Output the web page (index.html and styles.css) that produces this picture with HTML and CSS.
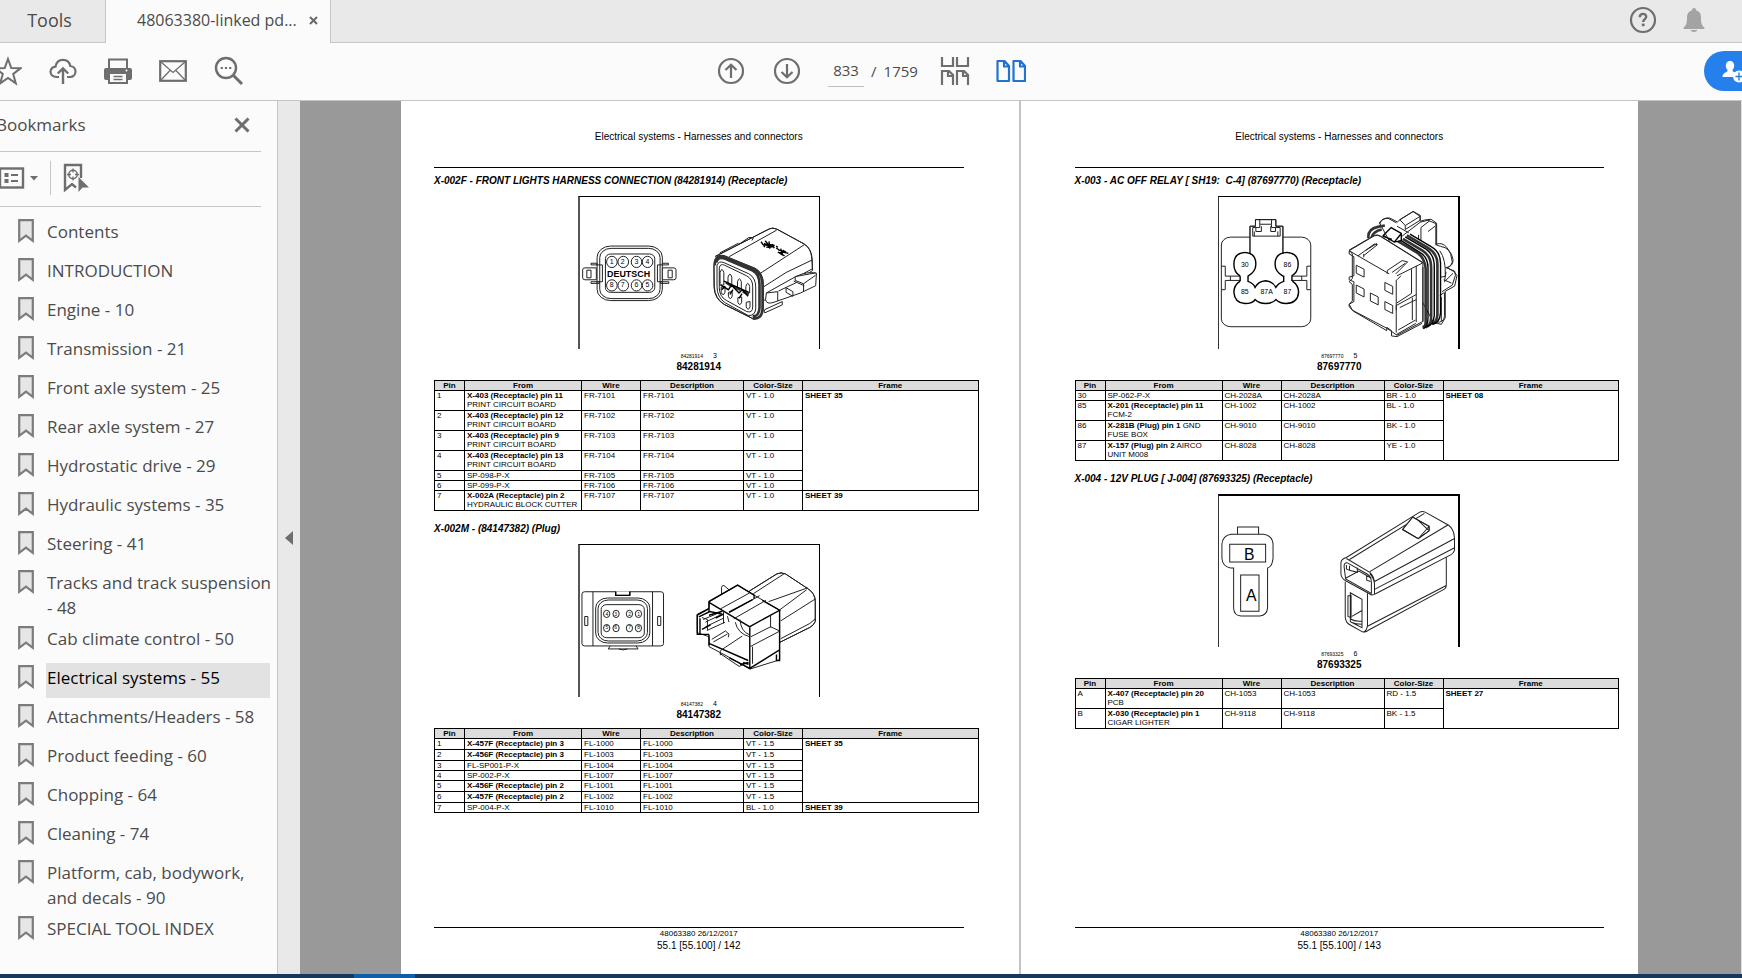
FILE: index.html
```
<!DOCTYPE html>
<html lang="en">
  <head>
    <meta charset="UTF-8" />
    <meta name="viewport" content="width=device-width, initial-scale=1.0" />
    <title>48063380-linked pdf</title>
    <link rel="stylesheet" href="styles.css">
  </head>
  <body>

    <svg class="defs" aria-hidden="true">
      <symbol id="bm" viewBox="0 0 16 24">
        <path d="M1.2 1.2h13.6v20.6L8 16.6l-6.8 5.2z" fill="#e6e6e6" stroke="#7c7c7c" stroke-width="2.2" />
      </symbol>
    </svg>

    <!-- tabs -->
    <header class="tabs">
      <button class="tab">Tools</button>
      <div class="tab active">
        <span>48063380-linked pd...</span>
        <button class="icon" aria-label="Close tab">
          <svg width="9" height="9" viewBox="0 0 9 9"><path d="M1 1l7 7M8 1L1 8" stroke="#6a6a6a" stroke-width="2" /></svg>
        </button>
      </div>
      <div class="tabs-right">
        <button class="icon" aria-label="Help">
          <svg width="28" height="28" viewBox="0 0 28 28" fill="none" stroke="#6e6e6e">
            <circle cx="14" cy="14" r="12" stroke-width="2.2" />
            <path d="M10.8 11.2c0-4.400 6.600-4.200 6.400-.4-.1 2.300-3 2.400-3 5.200" stroke-width="2.4" />
            <path d="M12.8 18.900h2.800" stroke-width="2.6" />
          </svg>
        </button>
        <button class="icon" aria-label="Notifications">
          <svg width="22" height="26" viewBox="0 0 22 26" fill="#a3a3a3">
            <path d="M11 1c1.300 0 2 .8 2 2.200 3.400.8 5 3.500 5 7 0 6 .6 8 3.400 10.300V22H.6v-1.500C3.400 18.200 4 16.200 4 10.200c0-3.500 1.600-6.200 5-7C9 1.800 9.700 1 11 1z" />
            <path d="M7.500 23h7c-.8 2.600-6.200 2.600-7 0z" />
          </svg>
        </button>
      </div>
    </header>

    <!-- toolbar -->
    <nav class="toolbar">
      <div class="tools-left">
        <button class="icon" aria-label="Star">
          <svg width="28" height="30" viewBox="0 0 28 30" fill="none" stroke="#6e6e6e" stroke-width="2"><path d="M14 3l3.300 9 9.200.3-7.300 5.700 2.600 9.300L14 22l-7.800 5.300L8.800 18 1.500 12.300l9.200-.3z" /></svg>
        </button>
        <button class="icon" aria-label="Upload">
          <svg width="28" height="28" viewBox="0 0 28 28" fill="none" stroke="#6e6e6e" stroke-width="2.200">
            <path d="M10 20H7.500C4 20 1.500 17.700 1.500 14.800S4 9.600 6.500 9.600C7.200 5.600 10 2.800 13.800 2.800c3.900 0 6.800 2.500 7.500 6.200 3 .3 5.200 2.600 5.200 5.500 0 3.200-2.500 5.500-5.500 5.500H18" />
            <path d="M14 27V11.500M8.800 16.500l5.200-5 5.200 5" stroke-width="2.400" />
          </svg>
        </button>
        <button class="icon" aria-label="Print">
          <svg width="28" height="28" viewBox="0 0 28 28" fill="none" stroke="#6e6e6e" stroke-width="2">
            <path d="M5 11V2.500h18V11" />
            <path d="M0 13q0-2 2-2h24q2 0 2 2v8q0 2-2 2h-3v-6H5v6H2q-2 0-2-2z" fill="#6e6e6e" stroke="none" />
            <path d="M5 16v10h18V16" /><path d="M9.500 19.500h9M9.500 22.500h9" stroke-width="1.300" />
            <circle cx="22.500" cy="13.500" r="1" fill="#fff" stroke="none" />
          </svg>
        </button>
        <button class="icon" aria-label="Email">
          <svg width="28" height="24" viewBox="0 0 28 24" fill="none" stroke="#6e6e6e">
            <rect x="1.200" y="2.200" width="25.600" height="19.600" stroke-width="2.200" />
            <path d="M2 3l12 10.500L26 3M2 21l9-9.500M26 21l-9-9.500" stroke-width="1.300" />
          </svg>
        </button>
        <button class="icon" aria-label="Search">
          <svg width="30" height="30" viewBox="0 0 30 30" fill="none" stroke="#6e6e6e">
            <circle cx="12" cy="12" r="10" stroke-width="2.400" />
            <path d="M19.500 19.500L28 28" stroke-width="3" />
            <path d="M6.700 12h2.200m2 0h2.200m2 0h2.200" stroke-width="2.200" />
          </svg>
        </button>
      </div>

      <div class="tools-mid">
        <button class="icon" aria-label="Previous page">
          <svg width="30" height="30" viewBox="-1 -1 30 30" fill="none" stroke="#6e6e6e" stroke-width="2.200">
            <circle cx="14" cy="14" r="12" /><path d="M14 21V8M8.500 13L14 7.800l5.500 5.200" />
          </svg>
        </button>
        <button class="icon" aria-label="Next page">
          <svg width="30" height="30" viewBox="-1 -1 30 30" fill="none" stroke="#6e6e6e" stroke-width="2.200">
            <circle cx="14" cy="14" r="12" /><path d="M14 7v13M8.500 15l5.500 5.200L19.500 15" />
          </svg>
        </button>
        <div class="pageno">
          <input id="pg" type="text" value="833" aria-label="Page number">
          <label for="pg">/</label>
          <span>1759</span>
        </div>
        <button class="icon" aria-label="Scroll view">
          <svg width="30" height="30" viewBox="0 0 30 30" fill="none" stroke="#6e6e6e" stroke-width="2.200">
            <path d="M2 1v9h11V1M17 1v9h11V1" />
            <path d="M2 29V15h7l4 4v10M17 29V15h7l4 4v10M8 15v5h5M23 15v5h5" />
          </svg>
        </button>
        <button class="icon" aria-label="Two page view">
          <svg width="30" height="24" viewBox="1 0 30 24" fill="none" stroke="#2272cf" stroke-width="2.200" stroke-linejoin="round">
            <path d="M2.500 2h7l4.500 5v15H2.500zM9 2v5.500h5M18.500 2h7L30 7v15H18.500zM25 2v5.500h5" />
          </svg>
        </button>
      </div>

      <div class="tools-right">
        <button class="share" aria-label="Share">
          <svg width="20" height="24" viewBox="0 0 20 24">
            <path d="M8 2c2.600 0 4.200 1.800 4.200 4.600 0 2-.8 3.600-1.800 4.600.2 2.400 5.600 2 5.600 6.800H.5c0-4.800 5-4.400 5.200-6.800-1-1-1.900-2.600-1.900-4.600C3.800 3.800 5.400 2 8 2z" fill="#fff" />
            <circle cx="17" cy="17.500" r="6" fill="#fff" />
            <path d="M17 13.500v8M13.500 17.500H20" stroke="#2680eb" stroke-width="1.400" />
          </svg>
        </button>
      </div>
    </nav>

    <main class="main">

      <!-- bookmarks -->
      <aside class="sidebar">
        <div class="side-head">
          <h2>Bookmarks</h2>
          <button class="icon" aria-label="Close panel">
            <svg width="16" height="16" viewBox="0 0 16 16"><path d="M1.500 1.500l13 13M14.500 1.500l-13 13" stroke="#6e6e6e" stroke-width="3" /></svg>
          </button>
        </div>
        <div class="side-tools">
          <button class="icon options" aria-label="Options">
            <svg width="40" height="22" viewBox="0 0 40 22" fill="none" stroke="#6e6e6e">
              <rect x="1" y="1.500" width="23" height="19" stroke-width="2.400" />
              <path d="M5.500 8h4m-4 6h4" stroke-width="4" /><path d="M12 8h7m-7 6h7" stroke-width="2" />
              <path d="M31 9h8l-4 4.500z" fill="#6e6e6e" stroke="none" />
            </svg>
          </button>
          <button class="icon find" aria-label="Find current bookmark">
            <svg width="26" height="30" viewBox="0 0 26 30" fill="none" stroke="#6e6e6e">
              <path d="M18 15V2H2v25l7-6 4 3.500" stroke-width="2.400" />
              <circle cx="10" cy="11.500" r="4.200" stroke-width="1.500" />
              <path d="M10 5.500v4m0 4v4M4 11.500h4m4 0h4" stroke-width="1.300" />
              <path d="M15.500 14v15l4-4.500H26z" fill="#6e6e6e" stroke="none" />
            </svg>
          </button>
        </div>
        <ul class="bookmarks">
          <li><svg class="bm"><use href="#bm" /></svg><a href="#">Contents</a></li>
          <li><svg class="bm"><use href="#bm" /></svg><a href="#">INTRODUCTION</a></li>
          <li><svg class="bm"><use href="#bm" /></svg><a href="#">Engine - 10</a></li>
          <li><svg class="bm"><use href="#bm" /></svg><a href="#">Transmission - 21</a></li>
          <li><svg class="bm"><use href="#bm" /></svg><a href="#">Front axle system - 25</a></li>
          <li><svg class="bm"><use href="#bm" /></svg><a href="#">Rear axle system - 27</a></li>
          <li><svg class="bm"><use href="#bm" /></svg><a href="#">Hydrostatic drive - 29</a></li>
          <li><svg class="bm"><use href="#bm" /></svg><a href="#">Hydraulic systems - 35</a></li>
          <li><svg class="bm"><use href="#bm" /></svg><a href="#">Steering - 41</a></li>
          <li><svg class="bm"><use href="#bm" /></svg><a href="#">Tracks and track suspension<br>- 48</a></li>
          <li><svg class="bm"><use href="#bm" /></svg><a href="#">Cab climate control - 50</a></li>
          <li><svg class="bm"><use href="#bm" /></svg><a class="current" href="#">Electrical systems - 55</a></li>
          <li><svg class="bm"><use href="#bm" /></svg><a href="#">Attachments/Headers - 58</a></li>
          <li><svg class="bm"><use href="#bm" /></svg><a href="#">Product feeding - 60</a></li>
          <li><svg class="bm"><use href="#bm" /></svg><a href="#">Chopping - 64</a></li>
          <li><svg class="bm"><use href="#bm" /></svg><a href="#">Cleaning - 74</a></li>
          <li><svg class="bm"><use href="#bm" /></svg><a href="#">Platform, cab, bodywork,<br>and decals - 90</a></li>
          <li><svg class="bm"><use href="#bm" /></svg><a href="#">SPECIAL TOOL INDEX</a></li>
        </ul>
      </aside>

      <button class="collapse" aria-label="Collapse panel">
        <svg width="8" height="14" viewBox="0 0 8 14"><path d="M8 0v14L0 7z" fill="#6e6e6e" /></svg>
      </button>

      <div class="document">

        <!-- page 142 -->
        <article class="page left">
          <header class="page-head">Electrical systems - Harnesses and connectors</header>

          <section>
            <h3>X-002F - FRONT LIGHTS HARNESS CONNECTION (84281914) (Receptacle)</h3>
            <figure>
              <svg class="draw" viewBox="0 0 241 153">
                <g transform="scale(.3827 .3333) translate(-467 -258)">
                  <rect x="512" y="406" width="172" height="165" rx="36" ry="34" />
                  <rect x="519" y="413" width="159" height="152" rx="30" ry="28" />
                  <rect x="534" y="430" width="130" height="116" rx="14" ry="14" />
                  <ellipse cx="551" cy="454" rx="14" ry="17" /><ellipse cx="581" cy="454" rx="14" ry="17" />
                  <ellipse cx="616" cy="454" rx="14" ry="17" /><ellipse cx="645" cy="454" rx="14" ry="17" />
                  <ellipse cx="551" cy="525" rx="14" ry="17" /><ellipse cx="581" cy="525" rx="14" ry="17" />
                  <ellipse cx="616" cy="525" rx="14" ry="17" /><ellipse cx="645" cy="525" rx="14" ry="17" />
                  <path class="w" d="M510 472h-30q-6 0-6 6v24q0 6 6 6h30zM684 472h30q6 0 6 6v24q0 6-6 6h-30z" />
                  <path d="M485 479h11v23h-11zM699 479h11v23h-11zM496 458h16v5h-16zM496 514h22v5h-22zM684 458h16v5h-16zM679 514h22v5h-22zM510 463h16v51h-16M684 463h-13v51h13" />
                  <!-- body -->
                  <path class="w" d="M824 437L966 354q9-5 20 1l72 45q18 12 20 45l2 35-126 90-60-60z" />
                  <path d="M824 437L966 354q9-5 20 1l72 45q20 14 21 50v25M860 438l125-80M940 490l118-88M835 427l50-30M884 402l28-22 12 1-4 8" />
                  <path d="M950 530l60-44 69-38M1079 475l-36 22" />
                  <path class="w" d="M958 548l78-50q30-16 54-10l-2 38-40 22-70 28q-20 8-22-8z" />
                  <path d="M1036 498l52-11M1034 498v12l22 10 32-26M1056 520v22M1010 532l18 12v14l-18-12zM958 548l30-4v28M990 542l48-26M1030 512l28 14M952 606l2-8 46-24v10l-46 24z" />
                  <!-- print on the housing -->
                  <path class="k" d="M944 393l10 16M952 398l18 10M955 390l14 20M962 400l18 4M965 392l2 22M975 408l-14 2M973 400l6 12M984 412l8 6M988 424l18 12M996 414l4 18M990 418l20 6M1004 418l-6 16M984 406l4 4M1002 424l14 4M948 402l14 2M958 410l16-6M992 426l16-4M996 432l8-14" />
                  <!-- seal and face -->
                  <path class="w" d="M820 465q0-34 24-30l84 38q22 12 22 50v72q-2 34-28 30l-74-42q-26-18-27-54z" />
                  <path class="rib" d="M822 465q0-32 24-28l80 38q22 12 22 50v72q-2 32-26 28M826 456q4-20 22-12l74 36q18 10 18 42v72q-2 26-18 24" />
                  <path d="M820 465v64q1 36 27 54l74 42M828 464q4-14 18-8l66 34q18 12 18 40v66q-2 22-20 20l-60-38q-22-16-22-50zM834 472q2-14 14-8l58 32q16 10 16 32v62q0 20-16 14l-54-34q-18-12-18-38z" />
                  <!-- sockets -->
                  <path d="M836 486q5-18 10 0v38h-10zM857 500q5-18 10 0v22M857 500v20M882 514q5-18 10 0v22M882 514v20M904 528q5-18 10 0v20M904 528v18M839 530v16q5 14 10 0v-16zM858 546v12q5 14 10 0v-14zM883 562v14q5 14 10 0v-16zM905 576v14q5 14 10 0v-16z" />
                  <path class="rib" d="M852 516l16 12M872 530l18 8M896 544l16 8" />
                  <path class="k" d="M846 512l66 34M838 524l20 14 8-14 20 24 8-10 16 20M840 538l10-10M862 552l8-14M886 564l8-14" />
                </g>
                <g class="num">
                  <text x="32" y="67">1</text><text x="43" y="67">2</text><text x="57" y="67">3</text><text x="68" y="67">4</text>
                  <text x="32" y="91">8</text><text x="43" y="91">7</text><text x="57" y="91">6</text><text x="68" y="91">5</text>
                </g>
                <text class="brand" x="49" y="81">DEUTSCH</text>
              </svg>
              <figcaption><small>84281914</small><span>3</span></figcaption>
              <b>84281914</b>
            </figure>
            <table>
              <colgroup><col class="c1"><col class="c2"><col class="c3"><col class="c4"><col class="c5"><col></colgroup>
              <thead>
                <tr><th>Pin</th><th>From</th><th>Wire</th><th>Description</th><th>Color-Size</th><th>Frame</th></tr>
              </thead>
              <tbody>
                <tr class="two"><td>1</td><td><b>X-403 (Receptacle) pin 11</b><br>PRINT CIRCUIT BOARD</td><td>FR-7101</td><td>FR-7101</td><td>VT - 1.0</td><td rowspan="6"><b>SHEET 35</b></td></tr>
                <tr class="two"><td>2</td><td><b>X-403 (Receptacle) pin 12</b><br>PRINT CIRCUIT BOARD</td><td>FR-7102</td><td>FR-7102</td><td>VT - 1.0</td></tr>
                <tr class="two"><td>3</td><td><b>X-403 (Receptacle) pin 9</b><br>PRINT CIRCUIT BOARD</td><td>FR-7103</td><td>FR-7103</td><td>VT - 1.0</td></tr>
                <tr class="two"><td>4</td><td><b>X-403 (Receptacle) pin 13</b><br>PRINT CIRCUIT BOARD</td><td>FR-7104</td><td>FR-7104</td><td>VT - 1.0</td></tr>
                <tr><td>5</td><td>SP-098-P-X</td><td>FR-7105</td><td>FR-7105</td><td>VT - 1.0</td></tr>
                <tr><td>6</td><td>SP-099-P-X</td><td>FR-7106</td><td>FR-7106</td><td>VT - 1.0</td></tr>
                <tr class="two"><td>7</td><td><b>X-002A (Receptacle) pin 2</b><br>HYDRAULIC BLOCK CUTTER</td><td>FR-7107</td><td>FR-7107</td><td>VT - 1.0</td><td><b>SHEET 39</b></td></tr>
              </tbody>
            </table>
          </section>

          <section>
            <h3>X-002M - (84147382) (Plug)</h3>
            <figure>
              <svg class="draw" viewBox="0 0 241 153">
                <g transform="scale(.3954 .3333) translate(-454 -43)">
                  <rect x="459" y="184" width="208" height="164" rx="7" ry="7" />
                  <path d="M487 184v164M639 184v164" />
                  <path class="w" d="M545 183v12h36v-12" />
                  <path class="k" d="M545 184v11h36v-11" />
                  <rect x="494" y="203" width="138" height="136" rx="30" ry="30" />
                  <rect x="500" y="209" width="126" height="124" rx="26" ry="26" />
                  <rect x="508" y="223" width="110" height="100" rx="14" ry="14" />
                  <ellipse cx="522" cy="251" rx="8" ry="11" /><ellipse cx="546" cy="251" rx="8" ry="11" />
                  <ellipse cx="580" cy="251" rx="8" ry="11" /><ellipse cx="603" cy="251" rx="8" ry="11" />
                  <ellipse cx="522" cy="294" rx="8" ry="11" /><ellipse cx="546" cy="294" rx="8" ry="11" />
                  <ellipse cx="580" cy="294" rx="8" ry="11" /><ellipse cx="603" cy="294" rx="8" ry="11" />
                  <path d="M466 259h8v27h-8zM652 259h8v27h-8zM531 348l-5 9h76l-5-9M553 357q10 6 22 0" />
                  <!-- rear shell -->
                  <path class="w" d="M886 182l70-52q10-6 22 0l56 44q20 14 20 40v60q-4 12-14 18l-78 46-60-60z" />
                  <path d="M886 182l70-52q10-6 22 0l56 44q20 14 20 40v60q-4 12-14 18l-78 46M896 190l78-60M935 214l100-42M962 240l70-62M966 272l88-66M966 326l74-46 14-14" />
                  <path d="M815 205v-34q0-6 6-6l18 18" />
                  <!-- front shell -->
                  <path class="w" d="M783 215l73-51 42 30 65 46v150l-76 28-50-34-54-34v-30l-30-12v-56l30-18z" />
                  <path class="k" d="M783 245v-32l73-49 42 30v12M886 290l77-50-44-30M963 240v120l-76 56M887 292v124l-52-32M783 216l104 74M783 340l100 52M963 350v42h-8v-18" />
                  <path d="M812 236l74-48M834 248l78-52M846 266l82-56M890 320l50-30 22 12M940 254v38M894 350v52M888 350l74-46M810 370l50 40 20-12M812 376v-12M850 276q6 34 36 44M862 268q2 36 24 46" />
                  <path class="k" d="M834 246l60-38M783 235l-30 20v58h30M757 260l28-16 32 8M760 264v46M783 313v34" />
                  <path d="M765 262l14 6v34M768 268l44-22M774 276l42-24M774 290l46-26M780 300l44-24M820 244v36M830 258l4 18M790 328l36-26M794 336l36-24M826 304l8 8-2 10M812 362l56-44" />
                  <path class="k" d="M783 255l34-12M765 298l22-14M800 264l20-12M862 404l22-6M870 398l14 6" />
                </g>
                <g class="num tiny">
                  <text x="27" y="71">4</text><text x="36" y="71">3</text><text x="50" y="71">2</text><text x="59" y="71">1</text>
                  <text x="27" y="85">5</text><text x="36" y="85">6</text><text x="50" y="85">7</text><text x="59" y="85">8</text>
                </g>
              </svg>
              <figcaption><small>84147382</small><span>4</span></figcaption>
              <b>84147382</b>
            </figure>
            <table>
              <colgroup><col class="c1"><col class="c2"><col class="c3"><col class="c4"><col class="c5"><col></colgroup>
              <thead>
                <tr><th>Pin</th><th>From</th><th>Wire</th><th>Description</th><th>Color-Size</th><th>Frame</th></tr>
              </thead>
              <tbody>
                <tr class="bold"><td>1</td><td><b>X-457F (Receptacle) pin 3</b></td><td>FL-1000</td><td>FL-1000</td><td>VT - 1.5</td><td rowspan="6"><b>SHEET 35</b></td></tr>
                <tr class="bold"><td>2</td><td><b>X-456F (Receptacle) pin 3</b></td><td>FL-1003</td><td>FL-1003</td><td>VT - 1.5</td></tr>
                <tr><td>3</td><td>FL-SP001-P-X</td><td>FL-1004</td><td>FL-1004</td><td>VT - 1.5</td></tr>
                <tr><td>4</td><td>SP-002-P-X</td><td>FL-1007</td><td>FL-1007</td><td>VT - 1.5</td></tr>
                <tr class="bold"><td>5</td><td><b>X-456F (Receptacle) pin 2</b></td><td>FL-1001</td><td>FL-1001</td><td>VT - 1.5</td></tr>
                <tr class="bold"><td>6</td><td><b>X-457F (Receptacle) pin 2</b></td><td>FL-1002</td><td>FL-1002</td><td>VT - 1.5</td></tr>
                <tr><td>7</td><td>SP-004-P-X</td><td>FL-1010</td><td>FL-1010</td><td>BL - 1.0</td><td><b>SHEET 39</b></td></tr>
              </tbody>
            </table>
          </section>

          <footer class="page-foot">
            <p>48063380 26/12/2017</p>
            <p class="num-line">55.1 [55.100] / 142</p>
          </footer>
        </article>

        <!-- page 143 -->
        <article class="page right">
          <header class="page-head">Electrical systems - Harnesses and connectors</header>

          <section>
            <h3>X-003 - AC OFF RELAY [ SH19:&nbsp; C-4] (87697770) (Receptacle)</h3>
            <figure class="thick">
              <svg class="draw" viewBox="0 0 241 153">
                <g transform="scale(.3954 .3333) translate(-451 -258)">
                  <rect x="457" y="379" width="228" height="271" rx="24" ry="24" />
                  <path class="w" d="M530 430v-84h14v-20h52v20h18v84" />
                  <path d="M530 346v84M614 346v84M544 326h52M544 326v20h-14M596 326v20h18M537 350h18v-10h30v10h22v26h-70zM555 340v-14M585 340v-14M545 350v12h14v-16M595 350v12h-12v-16M541 362v14M601 362v14" />
                  <path d="M457 467h10v30h38M457 538h10v-28h38M480 497v13M685 467h-10v30h-38M685 538h-10v-28h-38M662 497v13" />
                  <path class="k" d="M505 497q-16-12-16-36 0-34 28-36 28 2 28 36 0 22-20 36v16q14 6 18 18 8-18 27-20 18 2 26 20 6-12 20-18v-16h-2q-20-14-20-36 0-34 30-36 29 2 29 36 0 24-17 36M505 512q-16 12-16 34 2 32 28 34 20 0 26-12 10 12 27 12t26-12q10 12 26 12 30-2 32-34 0-22-16-34M505 497v15M637 497v15" />
                  <!-- rear latch -->
                  <path class="w" d="M860 335q10-16 26-14l20 12 6-6 34-26 18 12v18l12-4 16-2 14 12v66l10 4q26 4 32 40 0 20-16 24l18 12 8 12-6 32-24 16v80l-10 20-20-6z" />
                  <path d="M860 340q6-18 22-18l22 14M912 326l34-24 18 14-38 28zM926 344v12l38-28v-14M918 376l46-42 20-6 20 10M966 350l22-20M966 350v40M1004 338v66M984 362l18-16M905 346l30 20M960 372v14" />
                  <path d="M1006 400q14-6 26 10t14 44q-4 16-16 18M1014 420q16 26 14 78l-12 2M1028 470l24 12 2 12-8 30-26 20M1030 484l-4 30 22-26M1024 508l20 10M1026 548v68q0 16-12 20h-8M1014 556l12-10M1018 560v74" />
                  <!-- ribs -->
                  <path class="rib" d="M832 382q-2-28 24-34l18-4M840 380q4-18 26-24M930 374l52 36q26 18 26 50v154q-2 24-14 28M920 384l50 36q22 16 22 50v152q0 24-14 30M908 392l48 34q20 16 22 48v164q0 12-8 14" />
                  <path class="k" d="M938 370l54 38q24 16 24 50v150q-2 30-20 34M926 378l54 38q20 18 20 50v150q-2 30-18 32M914 388l50 38q20 14 20 46v150q0 28-12 34" />
                  <path class="k" d="M870 374l20-24 26 18v22l-18 4zM898 394l18-26M868 376l24 10" />
                  <!-- block -->
                  <path class="w" d="M783 418l64-44q8-4 16 2l108 80v178l-66 42-24-20-90-56-8-18 8-10v-50l-8-8 8-10v-74z" />
                  <path d="M783 420l64-45q8-4 16 2l108 80M783 420v10l12 8v58l-12 4v8l12 6v60l-12 8v8l12 14 84 58v-10l12 10v16l14 2 64-40M903 508v160M783 420l20 14 82 56M905 496l64-38M820 430v10M805 436l42-36 8 2-34 32M824 420l30-22M880 490v-10l38-30 14 4-30 36M892 486l34-28M905 508l10-12M942 476v74M954 466v170M903 600v-14l52-34M905 578l36-28M912 592l42-24M908 660l44-30M903 674l50-34M944 630v-68M971 470v165" />
                  <path d="M801 464l20 12v24l-20-12zM801 524l20 12v24l-20-12zM837 548l20 12v24l-20-12zM874 516l20 12v24l-20-12zM874 574l20 12v24l-20-12z" />
                </g>
                <g class="num">
                  <text x="26" y="70">30</text><text x="69" y="70">86</text>
                  <text x="26" y="98">85</text><text x="48" y="98">87A</text><text x="69" y="98">87</text>
                </g>
              </svg>
              <figcaption><small>87697770</small><span>5</span></figcaption>
              <b>87697770</b>
            </figure>
            <table>
              <colgroup><col class="c1"><col class="c2"><col class="c3"><col class="c4"><col class="c5"><col></colgroup>
              <thead>
                <tr><th>Pin</th><th>From</th><th>Wire</th><th>Description</th><th>Color-Size</th><th>Frame</th></tr>
              </thead>
              <tbody>
                <tr><td>30</td><td>SP-062-P-X</td><td>CH-2028A</td><td>CH-2028A</td><td>BR - 1.0</td><td rowspan="4"><b>SHEET 08</b></td></tr>
                <tr class="two"><td>85</td><td><b>X-201 (Receptacle) pin 11</b><br>FCM-2</td><td>CH-1002</td><td>CH-1002</td><td>BL - 1.0</td></tr>
                <tr class="two"><td>86</td><td><b>X-281B (Plug) pin 1</b> GND<br>FUSE BOX</td><td>CH-9010</td><td>CH-9010</td><td>BK - 1.0</td></tr>
                <tr class="two"><td>87</td><td><b>X-157 (Plug) pin 2</b> AIRCO<br>UNIT M008</td><td>CH-8028</td><td>CH-8028</td><td>YE - 1.0</td></tr>
              </tbody>
            </table>
          </section>

          <section>
            <h3>X-004 - 12V PLUG [ J-004] (87693325) (Receptacle)</h3>
            <figure class="thick top">
              <svg class="draw" viewBox="0 0 241 153">
                <g transform="scale(.3954 .3333) translate(-451 -104)">
                  <path d="M497 220v-22h54v22M480 220h84q22 4 24 30v44q-2 24-14 29v122q-2 22-20 24h-48q-18-2-19-24v-122h-8q-20-4-22-29v-44q2-26 23-30z" />
                  <path d="M477 251h92v54h-92zM505 344h47v110h-47z" />
                  <!-- lower block -->
                  <path d="M773 365v108q2 18 14 24l30 20q8 2 14-4l196-126q5-4 5-10v-88M830 400v98q-2 16-10 20M830 500l202-124" />
                  <!-- upper block -->
                  <path class="w" d="M762 305q2-10 14-14l188-138q6-4 14 0l60 40q14 12 15 40v36q-2 8-10 14l-192 118q-10 8-16 0l-62-40q-10-8-11-20z" />
                  <path d="M836 340q12 16 12 34v28M776 294l60 42q12 12 12 36v30M770 318q0-14 10-10l50 34q10 8 10 24v34l-66-44zM784 297l192-140M836 334l200-142M848 364l204-130M848 388l204-126" />
                  <path d="M776 314v12l8 4v-14M784 330l20 6v-14M774 354l34-22 32 22M828 346v14l10 4" />
                  <!-- latch -->
                  <path class="w" d="M920 206l26-38 42 28v14l-28 24z" />
                  <path d="M920 206l26-38 42 28v14l-28 24zM946 168l14 10 26 30M960 234l28-38" />
                  <!-- opening -->
                  <path d="M786 398l30 20v86l-30-18zM780 408v62l8 4v-68zM790 470l26-18M786 478q12 8 30 6M788 488q12 6 28 6" />
                </g>
                <text class="letter" x="30" y="65">B</text>
                <text class="letter" x="32" y="106">A</text>
              </svg>
              <figcaption><small>87693325</small><span>6</span></figcaption>
              <b>87693325</b>
            </figure>
            <table>
              <colgroup><col class="c1"><col class="c2"><col class="c3"><col class="c4"><col class="c5"><col></colgroup>
              <thead>
                <tr><th>Pin</th><th>From</th><th>Wire</th><th>Description</th><th>Color-Size</th><th>Frame</th></tr>
              </thead>
              <tbody>
                <tr class="two"><td>A</td><td><b>X-407 (Receptacle) pin 20</b><br>PCB</td><td>CH-1053</td><td>CH-1053</td><td>RD - 1.5</td><td rowspan="2"><b>SHEET 27</b></td></tr>
                <tr class="two"><td>B</td><td><b>X-030 (Receptacle) pin 1</b><br>CIGAR LIGHTER</td><td>CH-9118</td><td>CH-9118</td><td>BK - 1.5</td></tr>
              </tbody>
            </table>
          </section>

          <footer class="page-foot">
            <p>48063380 26/12/2017</p>
            <p class="num-line">55.1 [55.100] / 143</p>
          </footer>
        </article>

      </div>
    </main>

    <div class="taskbar"><span></span></div>

  </body>
</html>
```
FILE: styles.css
```
* {
  box-sizing: border-box;
}
body {
  display: flex;
  flex-direction: column;
  margin: 0;
  height: 100vh;
  overflow: hidden;
  background-color: #fbfbfb;
  color: #4b4b4b;
  font-family: "Open Sans", "Noto Sans", sans-serif;
  font-size: 17px;
}
h2, h3, p, ul, figure {
  margin: 0;
  padding: 0;
}
svg {
  display: block;
}
.defs {
  position: absolute;
  width: 0;
  height: 0;
}
button {
  font: inherit;
  color: inherit;
  background: none;
  border: 0;
  padding: 0;
}
.icon {
  flex: none;
}

/* tabs */
.tabs {
  display: flex;
  flex: none;
  height: 43px;
  background-color: #e9e9e9;
}
.tab {
  width: 106px;
  padding: 0 6px 2px 0;
  border-right: 1px solid #c6c6c6;
  border-bottom: 1px solid #c6c6c6;
  font-size: 18px;
}
.tab.active {
  display: flex;
  align-items: center;
  justify-content: space-between;
  width: 225px;
  padding: 0 12px 3px 31px;
  background-color: #fbfbfb;
  border-bottom: 0;
  font-size: 16px;
  white-space: nowrap;
}
.tabs-right {
  display: flex;
  flex: 1;
  align-items: center;
  justify-content: flex-end;
  gap: 26px;
  padding: 0 37px 2px 0;
  border-bottom: 1px solid #c6c6c6;
}

/* toolbar */
.toolbar {
  display: grid;
  grid-template-columns: 1fr auto 1fr;
  align-items: center;
  flex: none;
  height: 58px;
  padding-bottom: 2px;
  border-bottom: 1px solid #c6c6c6;
}
.tools-left {
  display: flex;
  align-items: center;
  gap: 27px;
  margin-left: -6px;
}
.tools-mid {
  display: flex;
  align-items: center;
  gap: 26px;
}
.pageno {
  display: flex;
  align-items: center;
  gap: 7px;
  font-size: 15px;
}
.pageno input {
  width: 36px;
  height: 32px;
  padding: 0;
  border: 0;
  border-bottom: 1px solid #c0c0c0;
  background: none;
  color: inherit;
  font: inherit;
  text-align: center;
}
.pageno span {
  margin-right: -4px;
}
.tools-right {
  display: flex;
  justify-content: flex-end;
}
.share {
  display: flex;
  align-items: center;
  justify-content: flex-end;
  width: 38px;
  height: 40px;
  border-radius: 20px 0 0 20px;
  background-color: #2680eb;
}

/* bookmarks */
.main {
  display: flex;
  flex: 1;
  min-height: 0;
}
.sidebar {
  flex: none;
  width: 278px;
  border-right: 1px solid #c6c6c6;
}
.side-head {
  display: flex;
  align-items: center;
  justify-content: space-between;
  height: 51px;
  margin-right: 16px;
  padding: 0 11px 3px 0;
  border-bottom: 1px solid #c6c6c6;
}
.side-head h2 {
  margin-left: -4px;
  font-size: 17px;
  font-weight: 400;
}
.side-tools {
  display: flex;
  align-items: center;
  height: 55px;
  margin-right: 16px;
  padding-bottom: 2px;
  border-bottom: 1px solid #c6c6c6;
}
.options {
  margin-left: -1px;
}
.find {
  display: flex;
  align-items: center;
  height: 34px;
  margin-left: 11px;
  padding-left: 12px;
  border-left: 1px solid #c6c6c6;
}
.bookmarks {
  padding: 10px 7px 0 18px;
  list-style: none;
}
.bookmarks li {
  display: flex;
  gap: 12px;
  margin-bottom: 4px;
}
.bm {
  flex: none;
  width: 16px;
  height: 24px;
  margin-top: 2px;
}
.bookmarks a {
  flex: 1;
  min-height: 35px;
  padding: 2px 0 0 1px;
  color: inherit;
  line-height: 25px;
  text-decoration: none;
  white-space: nowrap;
}
.bookmarks .current {
  background-color: #e2e2e2;
  color: #000;
}
.collapse {
  display: flex;
  flex: none;
  align-items: center;
  justify-content: center;
  width: 22px;
  background-color: #e9e9e9;
}

/* document */
.document {
  display: flex;
  flex: 1;
  min-width: 0;
  padding: 0 103px 0 101px;
  background-color: #999;
  border-right: 1px solid #e0e0e0;
  color: #000;
  font-family: "Liberation Sans", Arial, sans-serif;
  font-size: 10px;
  line-height: 12px;
}
.page {
  display: flex;
  flex: 1;
  flex-direction: column;
  min-width: 0;
  padding-top: 30px;
  background-color: #fff;
}
.page.left {
  padding-left: 33px;
  padding-right: 55px;
  border-right: 2px solid #c4c4c4;
}
.page.right {
  padding-left: 54px;
  padding-right: 34px;
}
.page-head {
  margin-bottom: 7px;
  padding-bottom: 24px;
  border-bottom: 1px solid #000;
  text-align: center;
}
section + section {
  margin-top: 12px;
}
h3 {
  font-size: 10px;
  font-style: italic;
  white-space: pre;
}
figure {
  display: flex;
  flex-direction: column;
  align-items: center;
  margin: 9px 0 7px;
}
.draw {
  width: 242px;
  height: 153px;
  margin-bottom: 2px;
  border: 1px solid #000;
  border-bottom: 0;
  border-left-width: 2px;
  border-left-color: #555;
}
.thick .draw {
  border-left: 1px solid #333;
  border-right-width: 2px;
}
.top .draw {
  border-top-width: 2px;
}
.draw g path, .draw rect, .draw ellipse {
  fill: none;
  stroke: #222;
  stroke-width: 1px;
  vector-effect: non-scaling-stroke;
}
.draw g path.w {
  fill: #fff;
}
.draw g path.k {
  stroke: #000;
  stroke-width: 1.4px;
}
.draw g path.rib {
  stroke: #333;
  stroke-width: 2.6px;
}
.num {
  font-size: 7px;
  text-anchor: middle;
}
.tiny {
  font-size: 5px;
}
.brand {
  font-size: 9px;
  font-weight: 700;
  text-anchor: middle;
}
.letter {
  font-size: 16px;
  text-anchor: middle;
}
figcaption {
  display: flex;
  gap: 10px;
  font-size: 7px;
  line-height: 10px;
}
figcaption small {
  font-size: 5px;
}

/* pin tables, a little wider than the rule above them */
table {
  width: calc(100% + 15px);
  border-collapse: collapse;
  table-layout: fixed;
  font-size: 8px;
  line-height: 9px;
}
.c1 {
  width: 30px;
}
.c2 {
  width: 117px;
}
.c3, .c5 {
  width: 59px;
}
.c4 {
  width: 103px;
}
th, td {
  padding: 0 2px;
  border: 1px solid #000;
  text-align: left;
  vertical-align: top;
  white-space: nowrap;
}
th {
  background-color: #dcdcdc;
  text-align: center;
}
.bold {
  height: 11px;
}
.two {
  height: 20px;
}

.page-foot {
  margin-top: auto;
  padding-bottom: 22px;
  border-top: 1px solid #000;
  text-align: center;
  font-size: 8px;
}
.page-foot .num-line {
  font-size: 10px;
}

.taskbar {
  flex: none;
  height: 4px;
  padding-left: 354px;
  background-color: #16395b;
}
.taskbar span {
  display: block;
  width: 61px;
  height: 4px;
  background-color: #0f5ea8;
}
```
